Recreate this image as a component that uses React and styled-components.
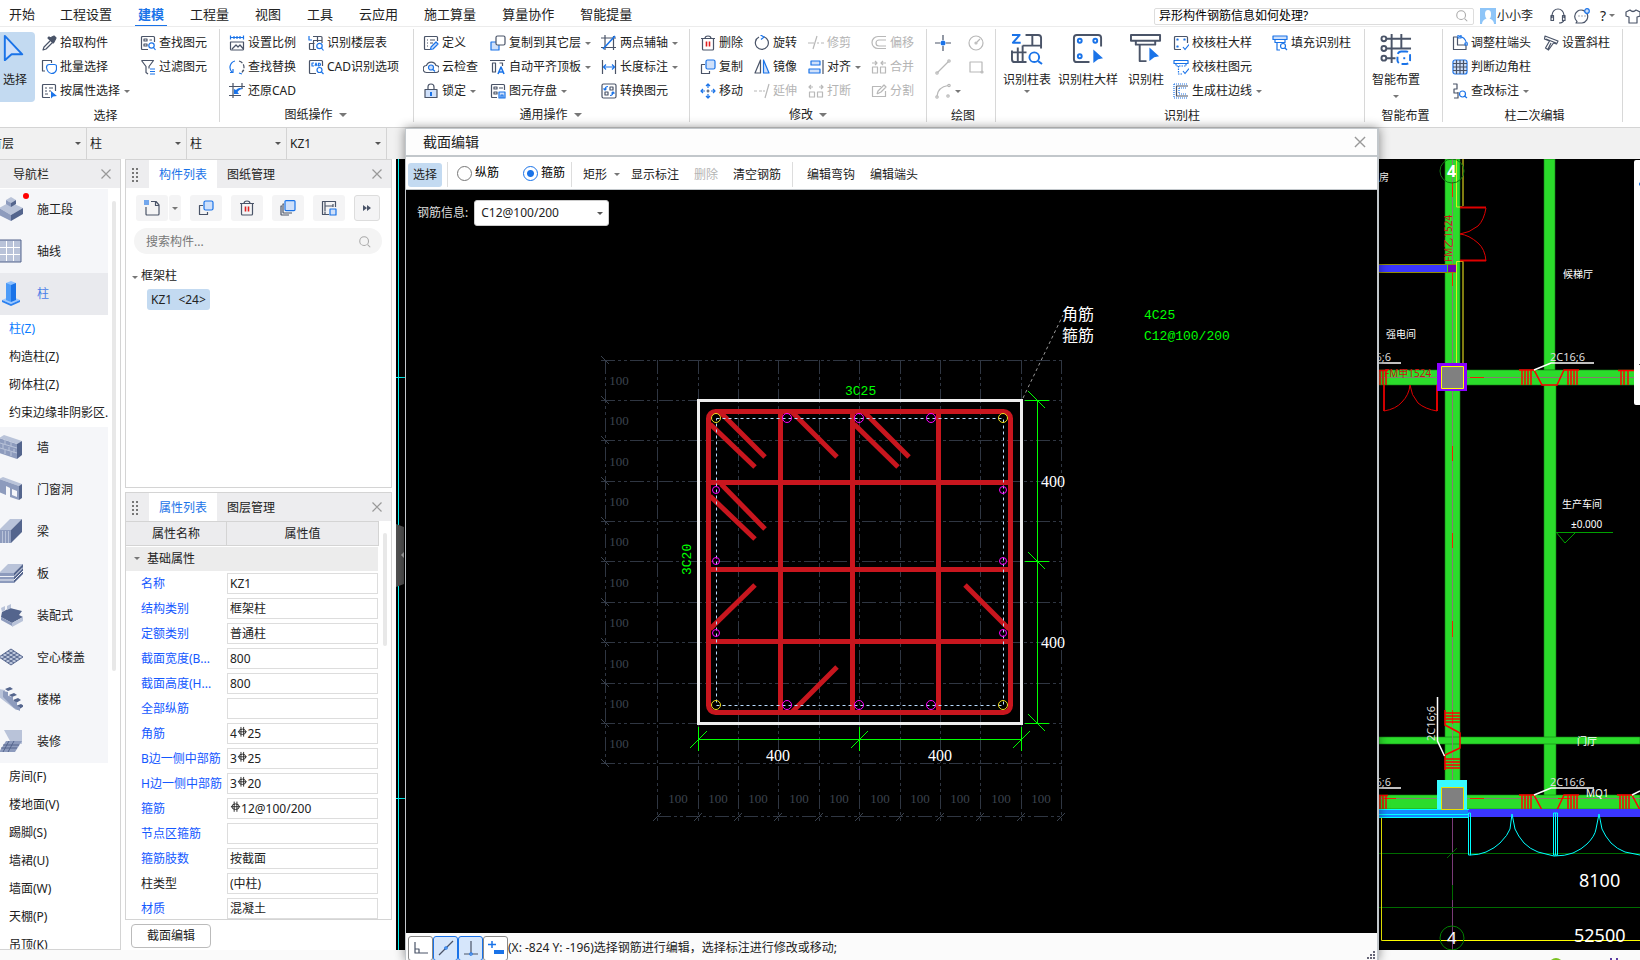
// react imports
import React from 'react';

// 3rd party imports
import styled, { createGlobalStyle, css } from 'styled-components';

const BLUE = '#1a73e8';
const INK = '#4a5468';
const LINE = '#d4d4d4';
const HEAD = '#ededef';
const PICKED = '#c3daf1';

const GlobalStyle = createGlobalStyle`
  * { box-sizing: border-box; }
  body { margin: 0; }
  body, button, input, select {
    font-family: 'Noto Sans', 'Noto Sans CJK SC', sans-serif;
    font-size: 12px;
    line-height: 16px;
    color: #222;
  }
  button {
    padding: 0;
    border: 0;
    background: none;
    white-space: nowrap;
  }
`;

/* ---------- icons ---------- */

const Svg = styled.svg`
  flex: none;
  display: block;
  fill: none;
  stroke: ${INK};
  stroke-width: ${p => p.$weight || 1.2};
  stroke-linejoin: round;
  .a { stroke: ${BLUE}; }
  .f { fill: ${BLUE}; stroke: none; }
  .l { fill: #cfe0fa; stroke: ${BLUE}; }
  .g { fill: #cfe0fa; }
  .r { stroke: #e02020; }
  .k { fill: ${INK}; }
  .w { fill: #fff; }
`;

const icons = {
  picker: <><path className="k" d="M9 3l4-2 2 2-2 4-1 1-5-5 1-1z" /><path d="M9 6l-6 6-1 3 3-1 6-6" /></>,
  batch: <><path d="M4 12H1.500V1.500h9V4" /><path className="a" d="M5.500 8.500q0-3 3-3h5q2 0 2 2v3q-1 4-5 4-4-.5-5-6z" /></>,
  props: <><path d="M9 14.500H2.500q-1 0-1-1v-11q0-1 1-1h11q1 0 1 1V8M4 5h2M8 5h4M4 8h2M8 8h2M4 11h3" /><path className="f" d="M10 8l6 5-4 .5-2 2z" /></>,
  find: <><path d="M8 14.500H2.500q-1 0-1-1v-11q0-1 1-1h11q1 0 1 1V7M4 4h3v2H4zM4 9h3v2H4zM9.500 5H12" /><circle className="a" cx="11.500" cy="10.500" r="2.700" /><path className="a" d="M13.500 12.500l2 2.500" /></>,
  filter: <><path d="M1.500 1.500h12L9 7.500v2M1.500 1.500L6 7.500v6l2 1.500" /><path className="a" d="M10 10h5M10 12.500h5M10 15h5" /></>,
  scale: <><path className="a" d="M1 2.500h14M1.500.5v4M14.500.5v4M5 1v3M8 1v3M11 1v3" /><path d="M1.500 7v7q0 1 1 1h11q1 0 1-1V7zM3 14l4-4 2 2 2-2 3 3.500" /></>,
  replace: <><path strokeDasharray="4 1.500" d="M10 2a6.500 6.500 0 0 1 3 11M15 11l-2 2.500" /><path className="a" d="M6 2a6.500 6.500 0 0 0-3 11M1 13.500h3V10M10 14l3 1" /></>,
  restore: <><path d="M4 0v15M0 3.500h16M0 12.500h12M13 0v6" /><path className="f" d="M14 6a5 5 0 0 0-7 1l-2-1v5h5L8.500 9q2-3 5.500-3z" /></>,
  floors: <><path className="a" d="M1 1v4h3" /><path d="M5 5.500h9M9.500 1v6M5 1.500h8q1 0 1 1V8M8 14.500H2.500q-1 0-1-1V8.500h5M5.500 6v8" /><circle className="a" cx="11.500" cy="11" r="2.700" /><path className="a" d="M13.500 13l2 2.500" /></>,
  cad: <><path d="M8 14.500H2.500q-1 0-1-1v-11q0-1 1-1h11q1 0 1 1V7" /><path className="a" d="M6 4H4v3h2M7 7l1-3 1 3M10.500 4v3q2 0 2-1.500T10.500 4" /><circle className="a" cx="11.500" cy="11" r="2.500" /><path className="a" d="M13.500 13l2 2" /></>,
  define: <><path d="M7 14.500H2.500q-1 0-1-1v-11q0-1 1-1h11q1 0 1 1V6M4 5h1M7 5h5M4 8h1M7 8h3M4 11h1" /><path className="l" d="M8 12l5-5 2 2-5 5-2.500.5z" /></>,
  cloud: <><path d="M4 13.500a3.500 3.500 0 0 1-.5-7 5 5 0 0 1 9.500 0 3.500 3.500 0 0 1-.5 7z" /><circle className="l" cx="8" cy="8.500" r="2.500" /><path className="a" d="M10 10.500l2 2" /></>,
  lock: <><path className="g" d="M2 6.500h12v8H2z" /><path d="M5 6V4q0-3 3-3t3 3v2" /><path className="f" d="M7 9h2v4H7z" /></>,
  copyTo: <><path className="l" d="M1 7h8v8H1z" /><rect className="w" x="6" y="1" width="9" height="9" rx="1.500" /></>,
  align: <><path d="M0 1.500h15M2.500 4h3v9h-3zM9.500 4h3v3" /><path className="a" strokeWidth="1.600" d="M8 15l3-7 3 7M9 13h4" /></>,
  save: <><path d="M7 14.500H2.500q-1 0-1-1v-11q0-1 1-1h11q1 0 1 1V7M4 4h3v2H4zM9 5h4M4 9h3v2H4z" /><path className="l" d="M9 9h6v6H9zM11 12h2v3h-2z" /></>,
  axis: <><path d="M0 3h15M4 0v15M0 12.500h15M12.500 1v14" /><path className="a" strokeWidth="1.600" d="M2 14L14 1" /></>,
  length: <><path d="M1.500 1v14M14.500 1v14" /><path className="a" d="M2 8h12M5 5.500L2.500 8 5 10.500M11 5.500L13.500 8 11 10.500" /></>,
  convert: <><rect x="1" y="1" width="14" height="14" rx="1.500" /><path d="M9 4h3v3H9zM4 9h3v3H4z" /><path className="a" d="M7 3.500q-3 0-3 3.500M2.500 5.500L4 7l1.500-1.500M9 12.500q3 0 3-3.500M10.500 10.500L12 9l1.500 1.500" /></>,
  trash: <><path d="M1 3.500h14M5 3.500q0-2.500 3-2.500t3 2.500M2.500 4v10q0 1 1 1h9q1 0 1-1V4" /><path className="r" strokeWidth="1.600" d="M6.500 6.500v5M9.500 6.500v5" /></>,
  copy: <><path d="M5 5.500H1.500v9h8V12" /><rect className="l" x="6" y="1" width="9" height="9" rx="1.500" /></>,
  move: <><path className="a" d="M8 1v4M8 11v4M1 8h4M11 8h4M6 3l2-2 2 2M6 13l2 2 2-2M3 6L1 8l2 2M13 6l2 2-2 2" /><path d="M8 6.500v3M6.500 8h3" /></>,
  rotate: <><path d="M10 1.700A6.500 6.500 0 1 1 5 2" /><path className="a" d="M6.500 0L10 2 7 4.500" /></>,
  mirror: <><path className="l" d="M9.500 1v13H15z" /><path d="M6.500 1v13H1z" /></>,
  extend: <path d="M0 8h3M5 8h3M9 8h2M15 1l-4 14" />,
  trim: <path d="M0 8h6M9 1L5 14M9 8h2M13 8h3" />,
  alignTo: <><path d="M15 1v14" /><path className="l" d="M3 2h9v4H3zM1 10h11v4H1z" /></>,
  break: <path d="M1.500 9h5v5h-5zM9.500 9h5v5h-5zM1 4h4M11 4h4M3 2L1 4l2 2M13 2l2 2-2 2" />,
  offset: <path d="M15 1.500H7a6 6 0 0 0 0 12h8M15 5H8a2.700 2.700 0 0 0 0 6h7" />,
  merge: <path d="M1.500 8h5v6h-5zM9.500 8h5v6h-5zM1 4h5M15 4h-5M4 2l2 2-2 2M12 2l-2 2 2 2" />,
  split: <path d="M10 3.500H1.500v10h13V8M6 11l1-3 6-6 2 2-5 5-4 2" />,
  point: <><path d="M8 0v5M8 11v5M0 8h5M11 8h5" /><circle className="f" cx="8" cy="8" r="2.500" /></>,
  circle: <><circle cx="8" cy="8" r="7" /><circle cx="8" cy="8" r="1" /><path d="M9 7l3-3" /></>,
  line: <><path d="M2.500 13.500l11-11" /><circle cx="2" cy="14" r="1.200" /><circle cx="14" cy="2" r="1.200" /></>,
  rect: <><rect x="2" y="3" width="12" height="10" /><circle className="w" cx="14" cy="13" r="1" /></>,
  arc: <><path d="M2 13Q3 4 13 2.500" /><circle cx="2" cy="14" r="1.200" /><circle cx="14" cy="2.500" r="1.200" /><circle cx="13" cy="13" r="1.200" /></>,
  checkSample: <><path d="M8 14.500H2.500q-1 0-1-1v-11q0-1 1-1h11q1 0 1 1V8" /><path className="a" d="M4 4h1v1H4zM11 4h1v1h-1zM4 11h1v1H4zM10 12l2 2.500 4-5" /></>,
  checkCol: <><path className="a" d="M1 1.500h14v3H1z" /><path className="a" strokeDasharray="1.500 1" d="M3 5v2h10V5M5.500 7v8H9" /><path className="a" d="M10 12l2 2.500 4-5" /></>,
  edge: <><path className="a" strokeDasharray="1 1" d="M1 1h14M1 15h14M1 1v14M6 5h8M6 11h8M6 5v6" /><path d="M15 3H3.500v10H15" /></>,
  fillCol: <><path className="l" d="M1 1h14v3.500H1z" /><path className="a" d="M3 5v2.500h10V5M5 8v7h3" /><circle className="a" cx="11" cy="11" r="2.500" /><path className="a" d="M13 13l2 2" /></>,
  colEnd: <><path d="M1.500 2h4v8H14v4.500H1.500z" /><path className="a" d="M7 1.500q6 0 7.500 7M6 0v3h3V0zM13 8h3v2h-3z" /></>,
  corner: <><rect className="l" x="1" y="1" width="14" height="14" rx="2" /><path d="M4.500 1v14M8 1v14M11.500 1v14M1 4.500h14M1 8h14M1 11.500h14" /></>,
  dimEdit: <><path d="M1 1h4v5H2v4h4M6 9v6H2" /><circle className="a" cx="10.500" cy="11" r="3" /><path className="a" d="M12.500 13l2.500 2" /></>,
  slant: <path d="M2 1l13 5-1.500 3-3-1-5 7-3-2 4-7-5-2zM3 4l10 4M8 8l-3 6" />,
  newDoc: <><path className="f" d="M0 0h5v5H0z" opacity=".6" /><path d="M7 1.500h5l3 3.500v9q0 1-1 1H3q-1 0-1-1V7M11.500 2v3.500H15" /></>,
  layers: <><path d="M4 4H3v8.500q0 .5.5.5H12M2 6H1v8.500q0 .5.5.5H9" /><rect className="l" x="5" y="0.600" width="10" height="10" rx="1" /></>,
  saveCol: <><path d="M8 14.500H1.500v-13h13V7M4 1.500v10M4 6h8M12 4v3M4 12v2" /><rect className="l" x="9" y="9" width="6" height="6" /></>,
  search: <><circle cx="7" cy="7" r="5" stroke="#a8a8a8" /><path stroke="#a8a8a8" d="M11 11l3 3" /></>,
  close: <path stroke="#999" d="M3.500 3.500l9 9M12.500 3.500l-9 9" />,
  headset: <path d="M2 10V7q1-6 6-6t6 6v3M1 7.500h2.500v5H1zM12.500 7.500H15v5h-2.500zM14 12q-1 3-5 3" />,
  chat: <><path d="M3 13.500A6.500 6.500 0 1 1 8 15H2z" /><path d="M4.500 8h1M7.500 8h1M10.500 8h1" /><circle className="l" cx="13" cy="3" r="2.300" /></>,
  shirt: <path d="M5 2l-4 2v4l3 1v6h8V9l3-1V4l-4-2q-3 3-6 0z" />,
  ortho: <path d="M2 2v11h13M2 9h4v4" />,
  slash: <><path d="M1 15L15 1" /><circle className="a w" cx="8" cy="8" r="1.200" /></>,
  perp: <><path d="M8 1v12M1 14h14" /><circle className="a w" cx="8" cy="14" r="1.200" /></>,
  insert: <><path className="a" strokeWidth="1.500" d="M4 1v7M0 4.500h8" /><path className="f" d="M6 10h10v4H6z" /></>,
};

const Icon = ({ name, size = 16 }) => (
  <Svg width={size} height={size} viewBox="0 0 16 16" aria-hidden="true">
    {icons[name]}
  </Svg>
);

const bigIcons = {
  cursor: <path d="M6 3v25l7-6h11z" className="l" />,
  table: <><path className="a" d="M1 2h8L2 10h8" /><path d="M15 2h13q3 0 3 3v11M12 13h19M22 2v11M1 20h15M7 15v15M12 13v17h4M16 30H4q-3 0-3-3v-9" /><circle className="a" cx="24" cy="25" r="5" /><path className="a" d="M28 29l4 3" /></>,
  sample: <><path d="M18 30H5q-3 0-3-3V5q0-3 3-3h22q3 0 3 3v9" /><circle className="a" cx="8" cy="8" r="2" /><circle className="a" cx="24" cy="8" r="2" /><circle className="a" cx="8" cy="24" r="2" /><path className="f" d="M22 17l10 9-5 1-5 4z" /></>,
  column: <><path d="M1 2h30v6H1zM6 8v4h20V8M10 12v17h7" /><path className="f" d="M20 15l10 9-5 1-5 4z" /></>,
  smart: <><path d="M6 6h26M6 16h26M6 26h10M12 1v30M22 1v15" /><circle className="w" cx="4" cy="6" r="2.500" /><circle className="w" cx="4" cy="16" r="2.500" /><circle className="w" cx="4" cy="26" r="2.500" /><rect className="a w" x="18" y="19" width="13" height="13" rx="4" strokeDasharray="7 3" /><path className="f" d="M24 25h2v2h-2z" /></>,
};

const BigIcon = ({ name }) => (
  <Svg width="32" height="32" viewBox="0 0 33 33" $weight={2} aria-hidden="true">
    {bigIcons[name]}
  </Svg>
);

const Caret = styled.i`
  flex: none;
  width: 0;
  height: 0;
  border: solid transparent;
  border-width: ${p => (p.$big ? '4px 4px 0' : '3px 3px 0')};
  border-top-color: #777;
`;

/* ---------- menu bar ---------- */

const Shell = styled.div`
  position: relative;
  display: flex;
  flex-direction: column;
  height: 100vh;
  overflow: hidden;
  background: #fff;
`;

const MenuBar = styled.nav`
  flex: none;
  display: flex;
  align-items: center;
  height: 27px;
  padding-left: 9px;
  border-bottom: 1px solid #ececec;
  overflow: hidden;
`;

const MenuItem = styled.button`
  flex: none;
  height: 27px;
  padding: 3px 3px 0;
  margin-right: 20px;
  font-size: 13px;
  border-bottom: 2px solid transparent;
  &:first-child {
    padding-left: 0;
    margin-right: 19px;
  }
  ${p => p.$active && css`
    color: ${BLUE};
    font-weight: 700;
    border-color: ${BLUE};
  `}
`;

const HelpSearch = styled.label`
  display: flex;
  align-items: center;
  width: 320px;
  height: 17px;
  margin: 6px 6px 0 auto;
  padding: 0 4px;
  border: 1px solid #ddd;
  border-radius: 2px;
  input {
    flex: 1;
    min-width: 0;
    padding: 0;
    border: 0;
    color: #000;
    background: none;
    outline: 0;
  }
`;

const UserBox = styled.button`
  display: flex;
  align-items: center;
  gap: 1px;
  margin: 6px 17px 0 0;
`;

const TopIcons = styled.div`
  display: flex;
  align-items: center;
  gap: 8px;
  margin: 5px -1px 0 0;
`;

const HelpButton = styled.button`
  display: flex;
  align-items: center;
  gap: 3px;
  padding: 0 2px;
  font-size: 14px;
`;

/* ---------- ribbon ---------- */

const Ribbon = styled.div`
  flex: none;
  display: flex;
  height: 100px;
  overflow: hidden;
`;

const Group = styled.section`
  flex: 0 0 ${p => p.$width}px;
  display: flex;
  flex-direction: column;
  margin: 2px 0 5px;
  padding-top: 2px;
  border-right: 1px solid #d8d8d8;
`;

const GroupBody = styled.div`
  flex: none;
  display: flex;
  height: 72px;
  padding-left: ${p => p.$pad || 0}px;
`;

const GroupTitle = styled.h2`
  display: flex;
  align-items: center;
  justify-content: center;
  gap: 6px;
  margin: ${p => (p.$more ? 4 : 5)}px 0 0;
  padding-left: ${p => (p.$pad === undefined ? 4 : p.$pad)}px;
  padding-right: ${p => p.$padEnd || 0}px;
  font-size: 12px;
  font-weight: 400;
`;

const Column = styled.div`
  flex: none;
  display: flex;
  flex-direction: column;
  width: ${p => (p.$width ? `${p.$width}px` : 'auto')};
  margin-left: ${p => p.$pad || 0}px;
`;

const Tool = styled.button`
  display: flex;
  align-items: center;
  gap: 3px;
  height: 24px;
  ${Caret} { margin-left: 1px; }
  &:disabled {
    color: #b4b4b4;
    ${Svg} { stroke: #b8b8b8; }
  }
`;

const BigTool = styled.button`
  flex: none;
  display: flex;
  flex-direction: column;
  align-items: center;
  width: ${p => p.$width}px;
  height: 70px;
  margin-top: 1px;
  padding-top: 1px;
  border-radius: 4px;
  span { margin: 7px 0 ${p => p.$gap || 2}px; }
  ${p => p.$active && css`
    margin-left: -5px;
    background: ${PICKED};
  `}
`;

const ribbon = [
  {
    title: '选择', width: 220, pad: 0, titlePad: 0, titlePadEnd: 8,
    big: [['cursor', '选择', 40, true]],
    cols: [
      { width: 99, pad: 6, items: [['picker', '拾取构件'], ['batch', '批量选择'], ['props', '按属性选择', 'v']] },
      { items: [['find', '查找图元'], ['filter', '过滤图元']] },
    ],
  },
  {
    title: '图纸操作', width: 194, pad: 9, more: true, titlePad: 0, titlePadEnd: 2,
    cols: [
      { width: 79, items: [['scale', '设置比例'], ['replace', '查找替换'], ['restore', '还原CAD']] },
      { items: [['floors', '识别楼层表'], ['cad', 'CAD识别选项']] },
    ],
  },
  {
    title: '通用操作', width: 276, pad: 9, more: true, titlePad: 0, titlePadEnd: 2,
    cols: [
      { width: 67, items: [['define', '定义'], ['cloud', '云检查'], ['lock', '锁定', 'v']] },
      { width: 111, items: [['copyTo', '复制到其它层', 'v'], ['align', '自动平齐顶板', 'v'], ['save', '图元存盘', 'v']] },
      { items: [['axis', '两点辅轴', 'v'], ['length', '长度标注', 'v'], ['convert', '转换图元']] },
    ],
  },
  {
    title: '修改', width: 237, pad: 10, more: true, titlePad: 0,
    cols: [
      { width: 54, items: [['trash', '删除'], ['copy', '复制'], ['move', '移动']] },
      { width: 54, items: [['rotate', '旋转'], ['mirror', '镜像'], ['extend', '延伸', 'x']] },
      { width: 63, items: [['trim', '修剪', 'x'], ['alignTo', '对齐', 'v'], ['break', '打断', 'x']] },
      { items: [['offset', '偏移', 'x'], ['merge', '合并', 'x'], ['split', '分割', 'x']] },
    ],
  },
  {
    title: '绘图', width: 69, pad: 8,
    cols: [
      { width: 33, items: [['point', ''], ['line', '', 'x'], ['arc', '', 'xv']] },
      { items: [['circle', '', 'x'], ['rect', '', 'x']] },
    ],
  },
  {
    title: '识别柱', width: 369, pad: 4,
    big: [['table', '识别柱表', 54, false, 2], ['sample', '识别柱大样', 68], ['column', '识别柱', 48]],
    cols: [
      { width: 99, pad: 3, items: [['checkSample', '校核柱大样'], ['checkCol', '校核柱图元'], ['edge', '生成柱边线', 'v']] },
      { items: [['fillCol', '填充识别柱']] },
    ],
  },
  { title: '智能布置', width: 78, pad: 4, big: [['smart', '智能布置', 54, false, 7]], cols: [] },
  {
    title: '柱二次编辑', width: 180, pad: 9,
    cols: [
      { width: 91, items: [['colEnd', '调整柱端头'], ['corner', '判断边角柱'], ['dimEdit', '查改标注', 'v']] },
      { items: [['slant', '设置斜柱']] },
    ],
  },
];

const menus = ['开始', '工程设置', '建模', '工程量', '视图', '工具', '云应用', '施工算量', '算量协作', '智能提量'];

const Header = () => (
  <>
    <MenuBar>
      {menus.map(m => (
        <MenuItem key={m} $active={m === '建模'}>{m}</MenuItem>
      ))}
      <HelpSearch>
        <input aria-label="帮助搜索" defaultValue="异形构件钢筋信息如何处理?" />
        <Icon name="search" size={14} />
      </HelpSearch>
      <UserBox>
        <svg width="16" height="16" viewBox="0 0 16 16" aria-hidden="true">
          <path fill="#8ec5f8" d="M0 0h16v16H0z" />
          <path fill="#fff" d="M5 6q0-4 3-4t3 4q0 4-1.500 4.500Q14 12 14 16H2q0-4 4.500-5.500Q5 9 5 6z" />
        </svg>
        小小李
      </UserBox>
      <TopIcons>
        <button aria-label="客服"><Icon name="headset" /></button>
        <button aria-label="消息"><Icon name="chat" /></button>
        <HelpButton aria-label="帮助">?<Caret /></HelpButton>
        <button aria-label="皮肤"><Icon name="shirt" /></button>
      </TopIcons>
    </MenuBar>
    <Ribbon>
      {ribbon.map(group => (
        <Group key={group.title} $width={group.width}>
          <GroupBody $pad={group.pad}>
            {(group.big || []).map(([icon, label, width, active, gap]) => (
              <BigTool key={label} $width={width} $active={active} $gap={gap}>
                <BigIcon name={icon} />
                <span>{label}</span>
                {gap && <Caret />}
              </BigTool>
            ))}
            {group.cols.map((col, i) => (
              <Column key={i} $width={col.width} $pad={col.pad}>
                {col.items.map(([icon, label, flags = '']) => (
                  <Tool key={icon} disabled={flags.includes('x')} aria-label={label || icon}>
                    <Icon name={icon} />
                    {label}
                    {flags.includes('v') && <Caret />}
                  </Tool>
                ))}
              </Column>
            ))}
          </GroupBody>
          <GroupTitle $more={group.more} $pad={group.titlePad} $padEnd={group.titlePadEnd}>
            {group.title}
            {group.more && <Caret $big />}
          </GroupTitle>
        </Group>
      ))}
    </Ribbon>
  </>
);

/* ---------- level / component selectors ---------- */

const SelectorBar = styled.div`
  flex: none;
  display: flex;
  height: 32px;
  margin-left: -13px;
  background: #f1f1f1;
  border-top: 1px solid ${LINE};
`;

const Drop = styled.label`
  position: relative;
  display: flex;
  align-items: center;
  select {
    width: 100%;
    height: 100%;
    padding: 0 3px;
    border: 0;
    outline: 0;
    background: none;
    appearance: none;
  }
  ${Caret} {
    position: absolute;
    right: 5px;
    border-top-color: #555;
    pointer-events: none;
  }
`;

const Selector = styled(Drop)`
  width: 100px;
  border-right: 1px solid ${LINE};
`;

/* ---------- docked panels ---------- */

const Workspace = styled.main`
  flex: 1;
  min-height: 0;
  display: flex;
  gap: 4px;
`;

const Panel = styled.section`
  flex: ${p => p.$flex || 'none'};
  min-height: 0;
  display: flex;
  flex-direction: column;
  border: 1px solid ${LINE};
  background: #fff;
`;

const NavPanel = styled(Panel)`
  width: 121px;
  border-left: 0;
`;

const PanelHead = styled.header`
  flex: none;
  display: flex;
  align-items: stretch;
  height: 28px;
  padding-right: 6px;
  background: ${HEAD};
  > button:last-child {
    display: flex;
    align-items: center;
    margin-left: auto;
  }
`;

const NavTitle = styled.h2`
  margin: 0 0 0 13px;
  font-size: 12px;
  font-weight: 400;
  line-height: 30px;
`;

const Grip = styled.i`
  width: 8px;
  margin: 7px 10px 5px 5px;
  background: radial-gradient(circle, #777 1px, transparent 1px) 0 0 / 4px 4px;
`;

const Tab = styled.button`
  padding: 1px 10px 0;
  ${p => p.$active && css`
    color: ${BLUE};
    background: #fff;
  `}
`;

const NavBody = styled.div`
  flex: 1;
  min-height: 0;
  display: flex;
  justify-content: space-between;
  padding-top: 1px;
  overflow: hidden;
`;

const NavList = styled.ul`
  width: 108px;
  margin: 0;
  padding: 0;
  list-style: none;
`;

const Thumb = styled.i`
  flex: none;
  width: 4px;
  height: ${p => p.$height}px;
  margin: 12px 4px 0;
  border-radius: 2px;
  background: #e8e8e8;
`;

const NavMain = styled.button`
  position: relative;
  display: flex;
  align-items: center;
  gap: 14px;
  width: 100%;
  height: 42px;
  background: ${p => (p.$active ? '#e9eaee' : '#f5f6f9')};
  color: ${p => (p.$active ? '#4a80e8' : '#222')};
`;

const NavSub = styled.button`
  display: block;
  width: 100%;
  height: 28px;
  padding-left: 9px;
  overflow: hidden;
  text-align: left;
  color: ${p => (p.$active ? '#0a7cff' : '#222')};
`;

const Dot = styled.i`
  position: absolute;
  left: 23px;
  top: 4px;
  width: 6px;
  height: 6px;
  border-radius: 50%;
  background: #f00;
`;

const C1 = '#b9c3d9';
const C2 = '#8d9bbd';
const C3 = '#54658d';

const navIcons = {
  施工段: <><path fill={C1} d="M-1 11l11-6 13 6-12 7z" /><path fill={C2} d="M-1 11l12 7v6l-12-6z" /><path fill={C3} d="M23 11l-12 7v6l12-7z" /><path fill={C1} d="M6 3l5-3 5 3-5 3z" /><path fill={C2} d="M6 3l5 3v4L6 7z" /><path fill={C3} d="M16 3l-5 3v4l5-3z" /></>,
  轴线: <><path fill={C1} stroke={C3} d="M-1 1h22v22H-1z" /><path stroke="#fff" d="M6.500 2v20M13.500 2v20M0 8.500h20M0 15.500h20" /></>,
  柱: <><path fill="#9cc8ff" d="M2 19l9-4 9 4-9 4z" /><path fill="#2a80f0" d="M2 19l9 4v2l-9-4zM20 19l-9 4v2l9-4z" /><path fill="#4c9bf8" d="M6 2h5v19l-5-2z" /><path fill="#1a73e8" d="M11 2h5v17l-5 2z" /><path fill="#8cc0ff" d="M6 2l5-2 5 2-5 2z" /></>,
  墙: <><path fill={C2} d="M-1 3l18 6v15l-18-6z" /><path fill={C1} d="M-1 3l5-3 18 6-5 3z" /><path fill={C3} d="M17 9l5-3v14l-5 4z" /><path stroke={C1} fill="none" d="M0 8l17 5M0 13l17 5M5 5v4M11 7v4M3 9v5M9 12v4M14 14v4M5 15v4M11 17v4" /></>,
  门窗洞: <><path fill={C1} d="M-1 2l4-2 19 7-3 2z" /><path fill={C2} fillRule="evenodd" d="M-1 2l20 7v14l-9-3v-9l-4-2v9l-7-3zM12 12v6l5 2v-6z" /><path fill={C3} d="M19 9l3-2v14l-3 2z" /></>,
  梁: <><path fill={C1} d="M-1 11L10 0h12L11 11z" /><path fill={C2} d="M-1 11h12v13H-1z" /><path fill={C3} d="M11 11L22 0v13L11 24z" /><path stroke={C1} d="M2.500 12v12M5.500 12v12M8.500 12v12" /></>,
  板: <><path fill={C1} d="M-1 12L8 3h15l-9 9z" /><path fill={C2} d="M-1 12h15v10H-1z" /><path fill={C3} d="M14 12l9-9v10l-9 9z" /><path stroke="#eef1f7" fill="none" d="M-1 15.500h15l9-9M-1 19h15l9-9" /></>,
  装配式: <><path fill={C3} d="M2 9l8-4 12 3-3 4 4 2-11 6L1 14z" /><path fill={C2} d="M1 14l11 6v3L1 17z" /><path fill={C1} d="M23 14l-11 6v4l11-6zM1 5l4-2v4L2 9zM7 3l4-2v4L7 7z" /></>,
  空心楼盖: <><path fill={C1} stroke={C3} d="M-1 12l12-8 12 8-12 8z" /><path stroke={C3} d="M2 10l12 8M5 8l12 8M8 6l12 8M2 14l12-8M5 16l12-8M8 18l12-8" /></>,
  楼梯: <><path fill={C1} d="M-1 2l6 1v5l5 1v4l5 1v4l5 1v4h-4L-1 10z" /><path fill={C3} d="M5 2l5-2 3 2-5 2zM9 8l5-2 3 2-5 2zM13 13l5-2 3 2-5 3zM16 19l5-2 3 2-6 4z" /><path fill={C2} d="M3 4l5 1v4l5 1v4l4 1v4l3 1v4l-6-3L3 10z" /></>,
  装修: <><path fill={C1} d="M4 1h18v14L10 12z" /><path fill={C2} d="M-1 23l7-11h16l-7 11z" /><path stroke={C3} fill="none" d="M3 16h16M1 19h16M9 12l-6 11M14 12L8 23" /></>,
};

const navItems = [
  '施工段', '轴线', '柱', '柱(Z)', '构造柱(Z)', '砌体柱(Z)', '约束边缘非阴影区...', '墙', '门窗洞', '梁', '板',
  '装配式', '空心楼盖', '楼梯', '装修', '房间(F)', '楼地面(V)', '踢脚(S)', '墙裙(U)', '墙面(W)', '天棚(P)', '吊顶(K)',
];

const Navigator = () => (
  <NavPanel>
    <PanelHead>
      <NavTitle>导航栏</NavTitle>
      <button aria-label="关闭导航栏"><Icon name="close" /></button>
    </PanelHead>
    <NavBody>
      <NavList>
        {navItems.map(name => (
          <li key={name}>
            {navIcons[name] ? (
              <NavMain $active={name === '柱'}>
                <svg width="23" height="26" viewBox="0 0 23 26" aria-hidden="true">{navIcons[name]}</svg>
                {name}
                {name === '施工段' && <Dot />}
              </NavMain>
            ) : (
              <NavSub $active={name === '柱(Z)'}>{name}</NavSub>
            )}
          </li>
        ))}
      </NavList>
      <Thumb $height={470} />
    </NavBody>
  </NavPanel>
);

const Dock = styled.div`
  flex: none;
  display: flex;
  flex-direction: column;
  width: 267px;
`;

const ListTools = styled.div`
  display: flex;
  gap: 9px;
  padding: 7px 10px;
`;

const ListButton = styled.button`
  display: flex;
  align-items: center;
  justify-content: center;
  width: ${p => p.$width || 32}px;
  height: 26px;
  border-radius: 3px;
  background: #f4f4f5;
  border: ${p => (p.$outlined ? '1px solid #ddd' : '0')};
`;

const SplitButton = styled.div`
  display: flex;
  gap: 1px;
`;

const ListSearch = styled.label`
  display: flex;
  align-items: center;
  height: 26px;
  margin: 0 9px 0 8px;
  padding: 1px 10px 0 12px;
  border-radius: 13px;
  background: #f4f4f4;
  input {
    flex: 1;
    min-width: 0;
    padding: 0;
    border: 0;
    background: none;
    &::placeholder { color: #777; }
  }
`;

const Tree = styled.div`
  padding: 14px 6px;
`;

const TreeRow = styled.div`
  display: flex;
  align-items: center;
  gap: 3px;
  ${Caret} { margin-top: 2px; }
`;

const TreeLeaf = styled.button`
  height: 21px;
  margin: 5px 0 0 15px;
  padding: 0 4px;
  border-radius: 3px;
  background: ${PICKED};
  white-space: pre;
`;

const PropScroll = styled.div`
  flex: 1;
  min-height: 0;
  display: flex;
  justify-content: space-between;
  overflow: hidden;
`;

const PropTable = styled.table`
  flex: none;
  align-self: flex-start;
  width: 253px;
  border-spacing: 0;
  table-layout: fixed;
  th {
    height: 25px;
    padding: 1px 0 0;
    font-weight: 400;
    background: #ececee;
    border: solid ${LINE};
    border-width: 1px 1px 1px 0;
  }
  th:first-child { width: 101px; }
  td { height: 25px; padding: 0 1px 0 0; }
  td:first-child { padding-left: 15px; white-space: nowrap; }
`;

const PropGroup = styled.div`
  display: flex;
  align-items: center;
  gap: 7px;
  height: 24px;
  margin-left: -15px;
  padding-left: 8px;
  background: #ececec;
`;

const PropName = styled.span`
  color: ${p => (p.$plain ? '#222' : '#1458ff')};
`;

const ValueBox = styled.label`
  display: flex;
  align-items: center;
  height: 21px;
  padding-left: 2px;
  border: 1px solid #ddd;
  input {
    width: 100%;
    min-width: 0;
    padding: 0;
    border: 0;
    outline: 0;
    background: none;
  }
`;

// HRB400 bar mark
const BarMark = () => (
  <svg width="12" height="16" viewBox="0 0 12 16" fill="none" stroke="#222" aria-hidden="true">
    <ellipse cx="6" cy="5.500" rx="4" ry="3" />
    <path d="M4.500 0v11M7.500 0v11M1 5.500h10" />
  </svg>
);

const properties = [
  ['名称', 'KZ1'],
  ['结构类别', '框架柱'],
  ['定额类别', '普通柱'],
  ['截面宽度(B...', '800'],
  ['截面高度(H...', '800'],
  ['全部纵筋', ''],
  ['角筋', '25', '4'],
  ['B边一侧中部筋', '25', '3'],
  ['H边一侧中部筋', '20', '3'],
  ['箍筋', '12@100/200', ' '],
  ['节点区箍筋', ''],
  ['箍筋肢数', '按截面'],
  ['柱类型', '(中柱)'],
  ['材质', '混凝土'],
];

const Gap = styled.div`
  flex: none;
  height: 4px;
`;

const ButtonRow = styled.div`
  flex: none;
  height: 30px;
  padding: 4px 6px 0;
`;

const SectionButton = styled.button`
  width: 80px;
  height: 24px;
  border: 1px solid #bbb;
  border-radius: 4px;
  background: #fff;
`;

const ComponentDock = () => (
  <Dock>
    <Panel $flex="0 1 329px">
      <PanelHead>
        <Grip />
        <Tab $active>构件列表</Tab>
        <Tab>图纸管理</Tab>
        <button aria-label="关闭"><Icon name="close" /></button>
      </PanelHead>
      <ListTools>
        <SplitButton>
          <ListButton aria-label="新建"><Icon name="newDoc" /></ListButton>
          <ListButton $width={12} aria-label="新建选项"><Caret /></ListButton>
        </SplitButton>
        <ListButton aria-label="复制"><Icon name="copy" /></ListButton>
        <ListButton aria-label="删除"><Icon name="trash" /></ListButton>
        <ListButton aria-label="层间复制"><Icon name="layers" /></ListButton>
        <ListButton aria-label="存档"><Icon name="saveCol" /></ListButton>
        <ListButton $width={26} $outlined aria-label="更多">
          <svg width="8" height="6" viewBox="0 0 8 6" aria-hidden="true">
            <path fill={INK} d="M0 0l4 3-4 3zM4 0l4 3-4 3z" />
          </svg>
        </ListButton>
      </ListTools>
      <ListSearch>
        <input aria-label="搜索构件" placeholder="搜索构件..." />
        <Icon name="search" size={14} />
      </ListSearch>
      <Tree>
        <TreeRow><Caret />框架柱</TreeRow>
        <TreeLeaf>{'KZ1  <24>'}</TreeLeaf>
      </Tree>
    </Panel>
    <Gap />
    <Panel $flex="1 1 0">
      <PanelHead>
        <Grip />
        <Tab $active>属性列表</Tab>
        <Tab>图层管理</Tab>
        <button aria-label="关闭"><Icon name="close" /></button>
      </PanelHead>
      <PropScroll>
        <PropTable>
          <thead>
            <tr><th>属性名称</th><th>属性值</th></tr>
          </thead>
          <tbody>
            <tr>
              <td colSpan="2"><PropGroup><Caret />基础属性</PropGroup></td>
            </tr>
            {properties.map(([name, value, count]) => (
              <tr key={name}>
                <td><PropName $plain={name === '柱类型'}>{name}</PropName></td>
                <td>
                  <ValueBox>
                    {count && <>{count.trim()}<BarMark /></>}
                    <input aria-label={name} defaultValue={value} />
                  </ValueBox>
                </td>
              </tr>
            ))}
          </tbody>
        </PropTable>
        <Thumb $height={113} />
      </PropScroll>
    </Panel>
    <ButtonRow><SectionButton>截面编辑</SectionButton></ButtonRow>
  </Dock>
);

/* ---------- floor plan ---------- */

const Plan = styled.svg`
  flex: 1;
  min-width: 0;
  height: 100%;
  background: #000;
  font-family: 'Noto Sans', 'Noto Sans CJK SC', sans-serif;
  fill: none;
`;

// stirrup mark across a beam, origin at the left end of the top edge
const BeamMark = ({ x, y, rotated }) => (
  <g transform={`translate(${x} ${y})${rotated ? ' rotate(90) scale(1 -1)' : ''}`}>
    <path stroke="#f00" strokeWidth="1.500" d="M0 0h15l8 15h15l7-15h15M3 0v15M6 0v15M9 0v15M12 0v15M49 0v15M52 0v15M55 0v15M58 0v15" />
  </g>
);

const BeamLabel = ({ x, y }) => (
  <>
    <path stroke="#fff" strokeWidth="1.500" d={`M${x - 16} ${y + 7}l17-7h43`} />
    <text x={x} y={y - 2} fontSize="11" fill="#ddd">2C16;6</text>
  </>
);

const FloorPlan = () => (
  <Plan viewBox="396 159 1244 791" preserveAspectRatio="xMaxYMin slice">
    <path stroke="#0ff" d="M398.500 159v791M396 377.500h10M396 798.500h10" />
    <path fill="#505050" d="M396 524l8 3v57l-8 3z" />
    <path fill="#aaa" d="M404 552v6l-3-3z" />

    <g fill="#2bdc2b" stroke="#148014" strokeWidth=".6">
      <path d="M1445 159h15v650h-15zM1544 159h11v211h-11zM1544 385h12v411h-12z" />
      <path d="M1379 370h256v15h-256zM1379 737h261v7h-261zM1379 795h261v14h-261z" />
    </g>
    <path stroke="#8a7a70" d="M1452.500 159v650M1379 377.500h255M1379 798.500h261" />
    <path stroke="#7a3a78" d="M1452.500 809v141" />
    <path stroke="#f02010" d="M1452.500 182v15M1452.500 272v14M1452.500 446v15M1452.500 533v15M1452.500 621v16M1452.500 710v14M1470 377.500h14M1470 798.500h14M1384 798.500h12M1558 798.500h12" />

    <path stroke="#807c10" strokeWidth="2" d="M1463 159v47M1463 261v105" />
    <path stroke="#d8f020" d="M1456.500 159v48h6M1463 261.500h-6.500V366" />
    <path fill="#3a36ff" d="M1379 265h68v7h-68z" />
    <path stroke="#908c00" d="M1379 264.500h77M1379 272.500h77" />
    <path fill="#7000b0" d="M1448 265h8v7h-8z" />

    <circle cx="1452" cy="171" r="12" stroke="#107810" />
    <text x="1447" y="177" fontSize="16" fontWeight="700" fill="#fff">4</text>

    <g stroke="#e00000">
      <path strokeWidth="2" d="M1460 207.500h26M1460 260.500h26M1384 385v26M1437 385v26" />
      <path d="M1486 208q-2 12-8 18-9 7-18 8 9 1 18 9 7 6 8 18M1384 411q12-2 18-9 7-7 8-17 1 10 8 18 7 6 19 8" />
    </g>
    <g fill="#c81414" fontSize="10">
      <text transform="translate(1452 262) rotate(-90)">FM乙1524</text>
      <text x="1384" y="377">FM甲1524</text>
    </g>

    <path fill="#8a00ff" d="M1437 363h30v28h-30z" />
    <path fill="#808080" stroke="#ff0" d="M1441.500 366.500h22v22h-22z" />

    <BeamMark x={1519} y={370} />
    <BeamMark x={1519} y={795} />
    <BeamMark x={1617} y={795} />
    <BeamMark x={1445} y={710} rotated />
    <path stroke="#f00" strokeWidth="1.500" d="M1379 370.500h9M1380 370v15M1383 370v15M1386 370v15M1379 795.500h9M1380 795v14M1383 795v14M1386 795v14M1618 370.500h16M1621 370v15M1624 370v15M1628 370v15" />
    <BeamLabel x={1550} y={363} />
    <BeamLabel x={1550} y={788} />
    <path stroke="#fff" strokeWidth="1.500" d="M1379 363h22M1379 788h22M1632 795l8-4M1437.500 697v44l7 15" />
    <g fill="#ddd" fontSize="11">
      <text x="1391" y="361" textAnchor="end">2C16;6</text>
      <text x="1391" y="786" textAnchor="end">2C16;6</text>
      <text transform="translate(1435 741) rotate(-90)">2C16;6</text>
    </g>

    <g fill="#fff" fontSize="10">
      <text x="1563" y="278">候梯厅</text>
      <text x="1386" y="338">强电间</text>
      <text x="1562" y="508">生产车间</text>
      <text x="1571" y="528">±0.000</text>
      <text x="1577" y="745">门厅</text>
      <text x="1586" y="797">MQ1</text>
      <text x="1379" y="181">房</text>
    </g>
    <path stroke="#00a000" d="M1556 532.500h57M1556 532l9 11 11-11" />

    <path fill="#3a36ff" d="M1468 809h172v8h-172z" />
    <path fill="#1488ff" d="M1379 809h89v8h-89z" />
    <path stroke="#0ff" d="M1379 809.500h90M1379 814.500h90M1379 817.500h90" />
    <path fill="#38fbff" d="M1437 780h30v29h-30z" />
    <path fill="#808080" stroke="#e8e000" d="M1441.500 787.500h22v22h-22z" />
    <path stroke="#006c00" d="M1379 853.500h261M1379 907.500h261M1447 858l10-10M1452.500 885v15" />
    <path stroke="#0ff" d="M1468.500 813v42h2v-42zM1553.500 813v42h2v-42zM1555.500 813v42h2v-42z" />
    <path stroke="#0ff" d="M1470 855q9 0 16-3 9-4 14-9 8-8 10-14l2-15 3 15q3 7 9 14 6 6 14 9l16 4q11 0 19-3 9-4 14-9 8-8 9-15l3-15 3 15q3 7 9 14 6 6 14 9l15 3" />
    <path stroke="#ff0" d="M1381.500 818v122.500H1640" />
    <circle cx="1452" cy="938" r="12" stroke="#008000" />
    <g fill="#fff">
      <text x="1447" y="944" fontSize="17">4</text>
      <text x="1579" y="887" fontSize="18">8100</text>
      <text x="1574" y="942" fontSize="18">52500</text>
    </g>
    <rect x="1634" y="160" width="12" height="245" rx="2" fill="#fff" />
    <circle cx="1641" cy="184" r="2" fill={BLUE} />
    <path stroke="#555" d="M1639 364.500h1" />
  </Plan>
);

const StatusStrip = styled.footer`
  flex: none;
  display: flex;
  align-items: flex-end;
  justify-content: flex-end;
  gap: 49px;
  height: 10px;
  padding-right: 22px;
  background: #fafafa;
`;

const StatusIcons = () => (
  <StatusStrip>
    <svg width="10" height="2" viewBox="0 0 10 2" aria-hidden="true">
      <path fill="#7ac020" d="M0 2q5-4 10 0z" />
    </svg>
    <svg width="8" height="2" viewBox="0 0 8 2" aria-hidden="true">
      <path fill="#5a3aa0" d="M0 0h2v2H0zM6 0h2v2H6z" />
    </svg>
  </StatusStrip>
);

/* ---------- section editor window ---------- */

const Window = styled.section`
  position: absolute;
  left: 405px;
  right: 261px;
  top: 128px;
  bottom: 0;
  display: flex;
  flex-direction: column;
  border: solid #c2c7cb;
  border-width: 1px 2px 0 1px;
  background: #fff;
  box-shadow: 0 0 10px rgba(0, 0, 0, 0.45);
`;

const WindowTitle = styled.header`
  flex: none;
  display: flex;
  align-items: center;
  justify-content: space-between;
  height: 28px;
  padding: 0 8px 0 17px;
  border-bottom: 2px solid #c2c7cb;
  background: #fdfdfd;
  font-size: 14px;
`;

const WindowTools = styled.div`
  flex: none;
  display: flex;
  align-items: center;
  height: 33px;
  padding: 3px 0 0 1px;
  border-bottom: 1px solid #c2c7cb;
`;

const EditButton = styled.button`
  height: 24px;
  margin-right: 5px;
  padding: 0 5px;
  border-radius: 3px;
  ${p => p.$active && css`
    margin-left: 1px;
    background: ${PICKED};
  `}
  &:disabled { color: #b4b4b4; }
`;

const ShapeButton = styled.button`
  display: flex;
  align-items: center;
  gap: 7px;
  height: 24px;
  margin: 0 4px 0 0;
  padding: 0 2px;
`;

const Divider = styled.i`
  width: 1px;
  height: 25px;
  background: #ddd;
  margin: 0 9px 0 ${p => p.$before || 0}px;
`;

const Radio = styled.label`
  display: flex;
  align-items: center;
  gap: 3px;
  width: ${p => p.$width}px;
  padding-bottom: 3px;
  color: #000;
  input {
    width: 15px;
    height: 15px;
    margin: 0;
    appearance: none;
    border: 1px solid #777;
    border-radius: 50%;
  }
  input:checked {
    border-color: ${BLUE};
    background: radial-gradient(circle, ${BLUE} 3px, transparent 4px);
  }
`;

const Stage = styled.div`
  flex: 1;
  min-height: 0;
  display: flex;
  flex-direction: column;
  background: #000;
`;

const StageBar = styled.div`
  flex: none;
  display: flex;
  align-items: center;
  gap: 6px;
  height: 46px;
  padding: 0 11px;
  color: #ddd;
  white-space: nowrap;
  label { color: #ddd; }
`;

const RebarSelect = styled(Drop)`
  width: 135px;
  height: 26px;
  border-radius: 3px;
  border: 1px solid #ccc;
  background: #fff;
  select { padding-left: 6px; }
`;

const Drawing = styled.svg`
  flex: 1;
  min-height: 0;
  width: 100%;
  fill: none;
  .num { font-family: 'Liberation Serif', serif; text-anchor: middle; }
  .tag { font-family: 'Liberation Mono', monospace; font-size: 13px; fill: #0f0; }
  .cjk { font-family: 'Noto Sans CJK SC', sans-serif; font-size: 16px; fill: #fff; }
`;

const gridX = [657, 698, 738, 778, 819, 859, 900, 940, 980, 1021, 1061];
const gridY = [360, 400, 440, 481, 521, 561, 602, 642, 683, 723, 763];

const hooks = [
  'M720 412l45 45', 'M710 424l45 43', 'M792 412l45 45', 'M854 424l44 43', 'M864 412l45 45',
  'M721 484l44 45', 'M710 496l45 43', 'M710 629l45 -44', 'M1009 629l-44 -44', 'M792 712l45 -45',
];

const SectionDrawing = () => (
  <Drawing viewBox="406 236 971 697" preserveAspectRatio="xMinYMin slice">
    <g stroke="#2f3642" strokeDasharray="14 3 3 3 3 3">
      {gridX.map(x => <path key={x} d={`M${x}.500 360v464`} />)}
      {gridY.map(y => <path key={y} d={`M601 ${y}.500h461`} />)}
      <path d="M605.500 360v404M657 816.500h405" />
    </g>
    <g stroke="#3a424e">
      {gridY.map(y => <path key={y} d={`M601 ${y - 4}l8 8`} />)}
      {gridX.map(x => <path key={x} d={`M${x - 4} 821l8-8`} />)}
    </g>
    <g className="num" fontSize="13" fill="#3c444f">
      {gridY.slice(1).map(y => <text key={y} x="619" y={y - 15}>100</text>)}
      {gridX.slice(1).map(x => <text key={x} x={x - 20} y="803">100</text>)}
    </g>

    <path stroke="#eee" strokeWidth="3" d="M698.500 400.500h323v323h-323z" />
    <g stroke="#c8161e" strokeWidth="5">
      <rect x="708.500" y="411.500" width="302" height="301" rx="7" />
      <path d="M780.500 411v301M852.500 411v301M938.500 411v301M708 482.500h302M708 569.500h302M708 641.500h302" />
      {hooks.map(d => <path key={d} d={d} />)}
    </g>
    <path stroke="#b8dcff" strokeDasharray="3 3" d="M716.500 418.500h287v287h-287z" />
    <g stroke="#f0e020">
      {[716, 1003].map(x => [418, 705].map(y => <circle key={`${x}-${y}`} cx={x} cy={y} r="4.500" />))}
    </g>
    <g stroke="#f0f">
      {[787, 859, 931].map(x => [418, 705].map(y => <circle key={`${x}-${y}`} cx={x} cy={y} r="4.500" />))}
      {[716, 1003].map(x => [490, 561, 633].map(y => <circle key={`${x}-${y}`} cx={x} cy={y} r="3.500" />))}
    </g>

    <g stroke="#0f0">
      <path d="M698 739.500h323M1037.500 400v323" />
      {[698, 859, 1021].map(x => <path key={x} d={`M${x}.500 727v24M${x - 8} 748l17-17`} />)}
      {[400, 561, 723].map(y => <path key={y} d={`M1025 ${y}.500h24M1028 ${y - 9}l17 17`} />)}
    </g>
    <g className="num" fontSize="16" fill="#fff">
      <text x="778" y="761">400</text>
      <text x="940" y="761">400</text>
      <text x="1053" y="487">400</text>
      <text x="1053" y="648">400</text>
    </g>
    <text className="tag" x="845" y="395">3C25</text>
    <text className="tag" transform="translate(691 575) rotate(-90)">3C20</text>
    <path stroke="#999" strokeDasharray="3 3" d="M1023 398l40-83" />
    <text className="cjk" x="1062" y="320">角筋</text>
    <text className="cjk" x="1062" y="341">箍筋</text>
    <text className="tag" x="1144" y="319">4C25</text>
    <text className="tag" x="1144" y="340">C12@100/200</text>
  </Drawing>
);

const WindowStatus = styled.footer`
  flex: none;
  display: flex;
  align-items: center;
  height: 27px;
  padding: 3px 1px 0 2px;
  background: #fbfbfb;
  white-space: nowrap;
`;

const SnapButton = styled.button`
  display: flex;
  align-items: center;
  justify-content: center;
  width: 25px;
  height: 25px;
  border: 1px solid ${p => (p.$on ? BLUE : '#888')};
  border-radius: 3px;
  background: ${p => (p.$on ? '#d6e6fb' : '#fff')};
`;

const Corner = styled.svg`
  margin-left: auto;
  align-self: flex-end;
`;

const SectionEditor = () => (
  <Window role="dialog" aria-label="截面编辑">
    <WindowTitle>
      截面编辑
      <button aria-label="关闭"><Icon name="close" size={18} /></button>
    </WindowTitle>
    <WindowTools>
      <EditButton $active>选择</EditButton>
      <Divider />
      <Radio $width={66}><input type="radio" name="bar" />纵筋</Radio>
      <Radio $width={48}><input type="radio" name="bar" defaultChecked />箍筋</Radio>
      <Divider />
      <ShapeButton>矩形<Caret /></ShapeButton>
      <EditButton>显示标注</EditButton>
      <EditButton disabled>删除</EditButton>
      <EditButton>清空钢筋</EditButton>
      <Divider $before={1} />
      <EditButton>编辑弯钩</EditButton>
      <EditButton>编辑端头</EditButton>
    </WindowTools>
    <Stage>
      <StageBar>
        <label htmlFor="rebar">钢筋信息:</label>
        <RebarSelect as="div">
          <select id="rebar"><option>C12@100/200</option></select>
          <Caret />
        </RebarSelect>
      </StageBar>
      <SectionDrawing />
    </Stage>
    <WindowStatus>
      <SnapButton aria-label="正交"><Icon name="ortho" /></SnapButton>
      <SnapButton $on aria-label="中点"><Icon name="slash" /></SnapButton>
      <SnapButton $on aria-label="垂点"><Icon name="perp" /></SnapButton>
      <SnapButton aria-label="动态输入"><Icon name="insert" /></SnapButton>
      (X: -824 Y: -196)选择钢筋进行编辑，选择标注进行修改或移动;
      <Corner width="9" height="9" viewBox="0 0 9 9" aria-hidden="true">
        <path fill="#667" d="M6 0h2v2H6zM3 3h2v2H3zM6 3h2v2H6zM0 6h2v2H0zM3 6h2v2H3zM6 6h2v2H6z" />
      </Corner>
    </WindowStatus>
  </Window>
);

const App = () => (
  <>
    <GlobalStyle />
    <Shell>
      <Header />
      <SelectorBar>
        {['首层', '柱', '柱', 'KZ1'].map((value, i) => (
          <Selector key={i}>
            <select aria-label={`筛选 ${i + 1}`}><option>{value}</option></select>
            <Caret />
          </Selector>
        ))}
      </SelectorBar>
      <Workspace>
        <Navigator />
        <ComponentDock />
        <FloorPlan />
      </Workspace>
      <StatusIcons />
      <SectionEditor />
    </Shell>
  </>
);

export default App;
